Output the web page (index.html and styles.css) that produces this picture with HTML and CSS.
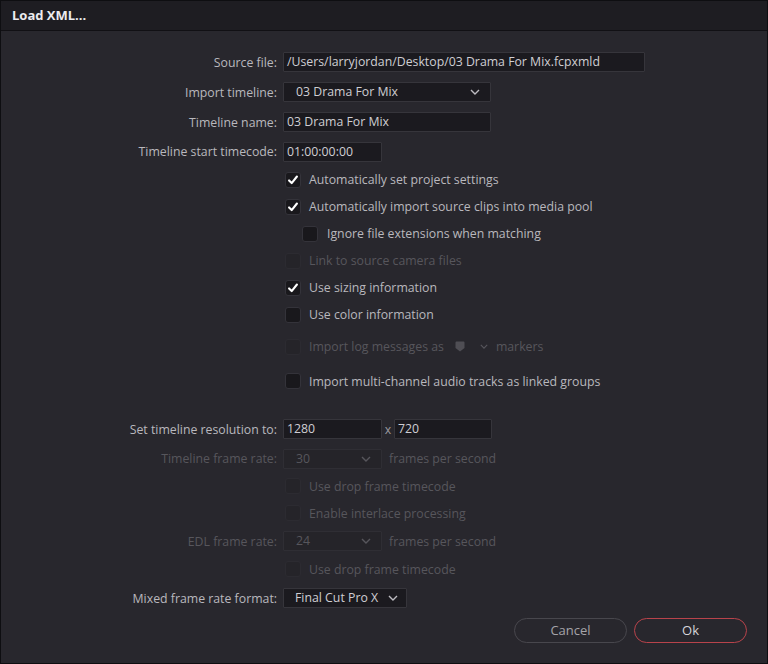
FILE: index.html
```html
<!DOCTYPE html>
<html>
<head>
<meta charset="utf-8">
<link rel="stylesheet" href="styles.css">
</head>
<body>
<div class="dialog">
  <div class="titlebar">Load XML...</div>
  <div class="form">
    <div class="row h30">
      <div class="label">Source file:</div>
      <div class="field w362">/Users/larryjordan/Desktop/03 Drama For Mix.fcpxmld</div>
    </div>
    <div class="row h30">
      <div class="label">Import timeline:</div>
      <div class="field select w208"><span>03 Drama For Mix</span><svg class="chev" viewBox="0 0 10 6"><path d="M1 1l4 4 4-4"/></svg></div>
    </div>
    <div class="row h30">
      <div class="label">Timeline name:</div>
      <div class="field w208">03 Drama For Mix</div>
    </div>
    <div class="row h29">
      <div class="label">Timeline start timecode:</div>
      <div class="field w99">01:00:00:00</div>
    </div>

    <div class="row h27">
      <div class="label"></div>
      <div class="check on"><svg viewBox="0 0 16 16"><path d="M3.5 8.5l3 3 6-7.5"/></svg></div>
      <div class="ctext">Automatically set project settings</div>
    </div>
    <div class="row h27">
      <div class="label"></div>
      <div class="check on"><svg viewBox="0 0 16 16"><path d="M3.5 8.5l3 3 6-7.5"/></svg></div>
      <div class="ctext">Automatically import source clips into media pool</div>
    </div>
    <div class="row h27">
      <div class="label"></div>
      <div class="check indent"></div>
      <div class="ctext">Ignore file extensions when matching</div>
    </div>
    <div class="row h27 disabled">
      <div class="label"></div>
      <div class="check"></div>
      <div class="ctext">Link to source camera files</div>
    </div>
    <div class="row h27">
      <div class="label"></div>
      <div class="check on"><svg viewBox="0 0 16 16"><path d="M3.5 8.5l3 3 6-7.5"/></svg></div>
      <div class="ctext">Use sizing information</div>
    </div>
    <div class="row h27">
      <div class="label"></div>
      <div class="check"></div>
      <div class="ctext">Use color information</div>
    </div>
    <div class="row h37 disabled">
      <div class="label"></div>
      <div class="check"></div>
      <div class="ctext">Import log messages as</div>
      <svg class="marker" viewBox="0 0 10 11"><path d="M1.5 0.5h7a1 1 0 0 1 1 1v5.5l-4.5 3.5-4.5-3.5v-5.5a1 1 0 0 1 1-1z"/></svg>
      <svg class="chev small" viewBox="0 0 10 6"><path d="M1 1l4 4 4-4"/></svg>
      <div class="ctext tight">markers</div>
    </div>
    <div class="row h32">
      <div class="label"></div>
      <div class="check"></div>
      <div class="ctext">Import multi-channel audio tracks as linked groups</div>
    </div>

    <div class="spacer"></div>

    <div class="row h30">
      <div class="label">Set timeline resolution to:</div>
      <div class="field w99">1280</div>
      <div class="times">x</div>
      <div class="field w98">720</div>
    </div>
    <div class="row h29 disabled">
      <div class="label">Timeline frame rate:</div>
      <div class="field select w99"><span>30</span><svg class="chev" viewBox="0 0 10 6"><path d="M1 1l4 4 4-4"/></svg></div>
      <div class="after">frames per second</div>
    </div>
    <div class="row h26 disabled">
      <div class="label"></div>
      <div class="check"></div>
      <div class="ctext">Use drop frame timecode</div>
    </div>
    <div class="row h28 disabled">
      <div class="label"></div>
      <div class="check"></div>
      <div class="ctext">Enable interlace processing</div>
    </div>
    <div class="row h28 disabled">
      <div class="label">EDL frame rate:</div>
      <div class="field select w99"><span>24</span><svg class="chev" viewBox="0 0 10 6"><path d="M1 1l4 4 4-4"/></svg></div>
      <div class="after">frames per second</div>
    </div>
    <div class="row h28 disabled">
      <div class="label"></div>
      <div class="check"></div>
      <div class="ctext">Use drop frame timecode</div>
    </div>
    <div class="row h30">
      <div class="label">Mixed frame rate format:</div>
      <div class="field select w124 fcp"><span>Final Cut Pro X</span><svg class="chev" viewBox="0 0 10 6"><path d="M1 1l4 4 4-4"/></svg></div>
    </div>

    <div class="buttons">
      <div class="btn cancel">Cancel</div>
      <div class="btn ok">Ok</div>
    </div>
  </div>
</div>
</body>
</html>
```

FILE: styles.css
```css
* { box-sizing: border-box; }
html, body { margin: 0; padding: 0; }
body {
  width: 768px;
  height: 664px;
  background: #28272d;
  font-family: "Open Sans", "Noto Sans", sans-serif;
  font-size: 12.3px;
  color: #b9b8bd;
}
.dialog {
  width: 768px;
  height: 664px;
  border: 1px solid #0e0e11;
  background: #28272d;
  display: flex;
  flex-direction: column;
}
.titlebar {
  height: 30px;
  flex: none;
  background: #1e1d22;
  border-bottom: 1px solid #111014;
  color: #ecebef;
  font-weight: 700;
  font-size: 13px;
  line-height: 29px;
  padding-left: 11px;
}
.form {
  padding-top: 16px;
  display: flex;
  flex-direction: column;
}
.row {
  display: flex;
  align-items: center;
  flex: none;
}
.h26 { height: 26px; }
.h27 { height: 27px; }
.h28 { height: 28px; }
.h29 { height: 29px; }
.h30 { height: 30px; }
.h32 { height: 32px; }
.h37 { height: 37px; }
.spacer { height: 17px; flex: none; }
.label {
  width: 276px;
  flex: none;
  text-align: right;
  margin-right: 6px;
  white-space: nowrap;
}
.field {
  height: 20px;
  background: #1b1a1f;
  border: 1px solid #36353b;
  border-radius: 1px;
  color: #cfced3;
  padding-left: 3px;
  line-height: 18px;
  white-space: nowrap;
  display: flex;
  align-items: center;
}
.w362 { width: 362px; }
.w208 { width: 208px; }
.w99 { width: 99px; }
.w98 { width: 98px; }
.w124 { width: 124px; }
.select {
  padding-left: 12px;
  padding-right: 10px;
  justify-content: space-between;
}
.select.fcp { padding-left: 11px; padding-right: 8px; }
.chev {
  width: 10px;
  height: 6px;
  fill: none;
  stroke: #bdbcc1;
  stroke-width: 1.4;
}
.check {
  width: 16px;
  height: 16px;
  flex: none;
  margin-left: 2px;
  border-radius: 3px;
  background: #19181c;
  border: 1px solid #34333a;
  display: flex;
  align-items: center;
  justify-content: center;
}
.check.indent { margin-left: 19px; }
.check svg {
  width: 16px;
  height: 16px;
  fill: none;
  stroke: #ffffff;
  stroke-width: 2.4;
  stroke-linecap: round;
  stroke-linejoin: round;
}
.ctext {
  margin-left: 8px;
  white-space: nowrap;
}
.check.indent + .ctext { margin-left: 9px; }
.times {
  width: 12px;
  text-align: center;
  color: #9a999e;
}
.after { margin-left: 7px; }

.disabled { color: #57565c; }
.disabled .check {
  background: #252429;
  border-color: #2c2b31;
}
.disabled .field {
  background: #252429;
  border-color: #2f2e34;
  color: #57565c;
}
.disabled .chev { stroke: #57565c; }
.marker {
  width: 10px;
  height: 11px;
  margin-left: 11px;
  fill: #4f4e54;
}
.chev.small {
  width: 8px;
  height: 5px;
  margin-left: 15px;
  stroke: #57565c;
}
.ctext.tight { margin-left: 8px; }

.buttons {
  display: flex;
  justify-content: flex-end;
  gap: 7px;
  padding-right: 20px;
  margin-top: 5px;
}
.btn {
  width: 113px;
  height: 25px;
  border-radius: 13px;
  text-align: center;
  line-height: 23px;
  font-size: 13px;
}
.cancel {
  border: 1px solid #48474d;
  color: #a5a4a9;
}
.ok {
  border: 1.5px solid #b8434b;
  color: #d6d5da;
}
```
